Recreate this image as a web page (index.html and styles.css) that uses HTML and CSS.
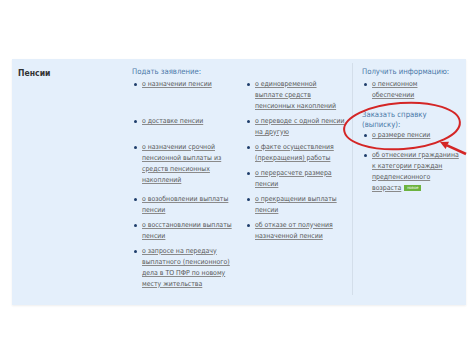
FILE: index.html
```html
<!DOCTYPE html>
<html lang="ru">
<head>
<meta charset="utf-8">
<title>Пенсии</title>
<link rel="stylesheet" href="styles.css">
</head>
<body>
<section class="panel">
  <h2 class="title">Пенсии</h2>
  <div class="apply">
    <div class="head">Подать заявление:</div>
    <ul class="grid">
      <li class="c1 r1"><a href="#">о назначении пенсии</a></li>
      <li class="c2 r1"><a href="#">о единовременной<br>выплате средств<br>пенсионных накоплений</a></li>
      <li class="c1 r2"><a href="#">о доставке пенсии</a></li>
      <li class="c2 r2"><a href="#">о переводе с одной пенсии<br>на другую</a></li>
      <li class="c1 r3 span2"><a href="#">о назначении срочной<br>пенсионной выплаты из<br>средств пенсионных<br>накоплений</a></li>
      <li class="c2 r3"><a href="#">о факте осуществления<br>(прекращения) работы</a></li>
      <li class="c2 r4"><a href="#">о перерасчете размера<br>пенсии</a></li>
      <li class="c1 r5"><a href="#">о возобновлении выплаты<br>пенсии</a></li>
      <li class="c2 r5"><a href="#">о прекращении выплаты<br>пенсии</a></li>
      <li class="c1 r6"><a href="#">о восстановлении выплаты<br>пенсии</a></li>
      <li class="c2 r6"><a href="#">об отказе от получения<br>назначенной пенсии</a></li>
      <li class="c1 r7"><a href="#">о запросе на передачу<br>выплатного (пенсионного)<br>дела в ТО ПФР по новому<br>месту жительства</a></li>
    </ul>
  </div>
  <div class="info">
    <div class="head">Получить информацию:</div>
    <ul class="list">
      <li><a href="#">о пенсионном<br>обеспечении</a></li>
    </ul>
    <div class="head head2">Заказать справку<br>(выписку):</div>
    <ul class="list">
      <li><a href="#">о размере пенсии</a></li>
      <li class="gap"><span class="txt"><a href="#">об отнесении гражданина<br>к категории граждан<br>предпенсионного<br>возраста</a><span class="badge">новое</span></span></li>
    </ul>
  </div>
</section>
<svg class="marks" width="474" height="355" viewBox="0 0 474 355">
  <ellipse cx="402" cy="126" rx="58" ry="23" transform="rotate(-4 402 126)" fill="none" stroke="#d42626" stroke-width="2"/>
  <line x1="466" y1="154" x2="447" y2="145.4" stroke="#d42626" stroke-width="2.6"/>
  <polygon points="440,142 445.6,149 449,141.8" fill="#d42626"/>
</svg>
</body>
</html>
```
FILE: styles.css
```css
html, body {
  margin: 0;
  padding: 0;
  background: #ffffff;
}
body {
  width: 474px;
  height: 355px;
  position: relative;
  overflow: hidden;
  font-family: "DejaVu Sans Condensed", "DejaVu Sans", "Liberation Sans", sans-serif;
}
.panel {
  margin: 59px 0 0 12px;
  width: 454px;
  height: 246px;
  background: #e4effb;
  box-shadow: 0 1px 2px rgba(0, 0, 0, 0.07);
  display: flex;
  align-items: flex-start;
}
.title {
  margin: 7px 0 0 0;
  padding-left: 6px;
  width: 114px;
  flex: none;
  font-size: 8.6px;
  line-height: 14px;
  font-weight: bold;
  color: #333333;
}
.apply {
  width: 220px;
  flex: none;
  padding-top: 6.5px;
}
.head {
  font-size: 7.7px;
  line-height: 11px;
  color: #4a78a8;
  margin-bottom: 2px;
  white-space: nowrap;
}
ul {
  list-style: none;
  margin: 0;
  padding: 0;
}
li {
  display: flex;
  align-items: flex-start;
  gap: 5px;
  font-size: 6.9px;
  line-height: 11px;
  white-space: nowrap;
}
li::before {
  content: "";
  flex: none;
  width: 3px;
  height: 3px;
  border-radius: 50%;
  background: #1e3d6b;
  margin: 4px 0 0 2px;
}
a {
  color: #575757;
  text-decoration: underline;
  text-decoration-color: #8a8a8a;
}
.grid {
  display: grid;
  grid-template-columns: 113px 107px;
  row-gap: 4px;
  grid-template-rows: 33px repeat(5, 22px) 44px;
}
.c1 { grid-column: 1; }
.c2 { grid-column: 2; }
.r1 { grid-row: 1; }
.r2 { grid-row: 2; }
.r3 { grid-row: 3; }
.r4 { grid-row: 4; }
.r5 { grid-row: 5; }
.r6 { grid-row: 6; }
.r7 { grid-row: 7; }
.span2 { grid-row: 3 / span 2; }
.info {
  flex: 1;
  align-self: stretch;
  margin: 4px 0 10px 0;
  padding: 2.5px 0 0 9px;
  border-left: 1px solid #d3deea;
}
.head2 {
  margin-top: 9px;
  line-height: 10px;
  margin-bottom: 0.5px;
}
.list .gap {
  margin-top: 8.5px;
}
.badge {
  display: inline-block;
  vertical-align: 1px;
  margin-left: 3px;
  width: 17px;
  height: 6px;
  background: #6cb33f;
  color: #ffffff;
  font-size: 4px;
  line-height: 6px;
  text-align: center;
  text-decoration: none;
}
.marks {
  position: absolute;
  left: 0;
  top: 0;
  pointer-events: none;
}
```
